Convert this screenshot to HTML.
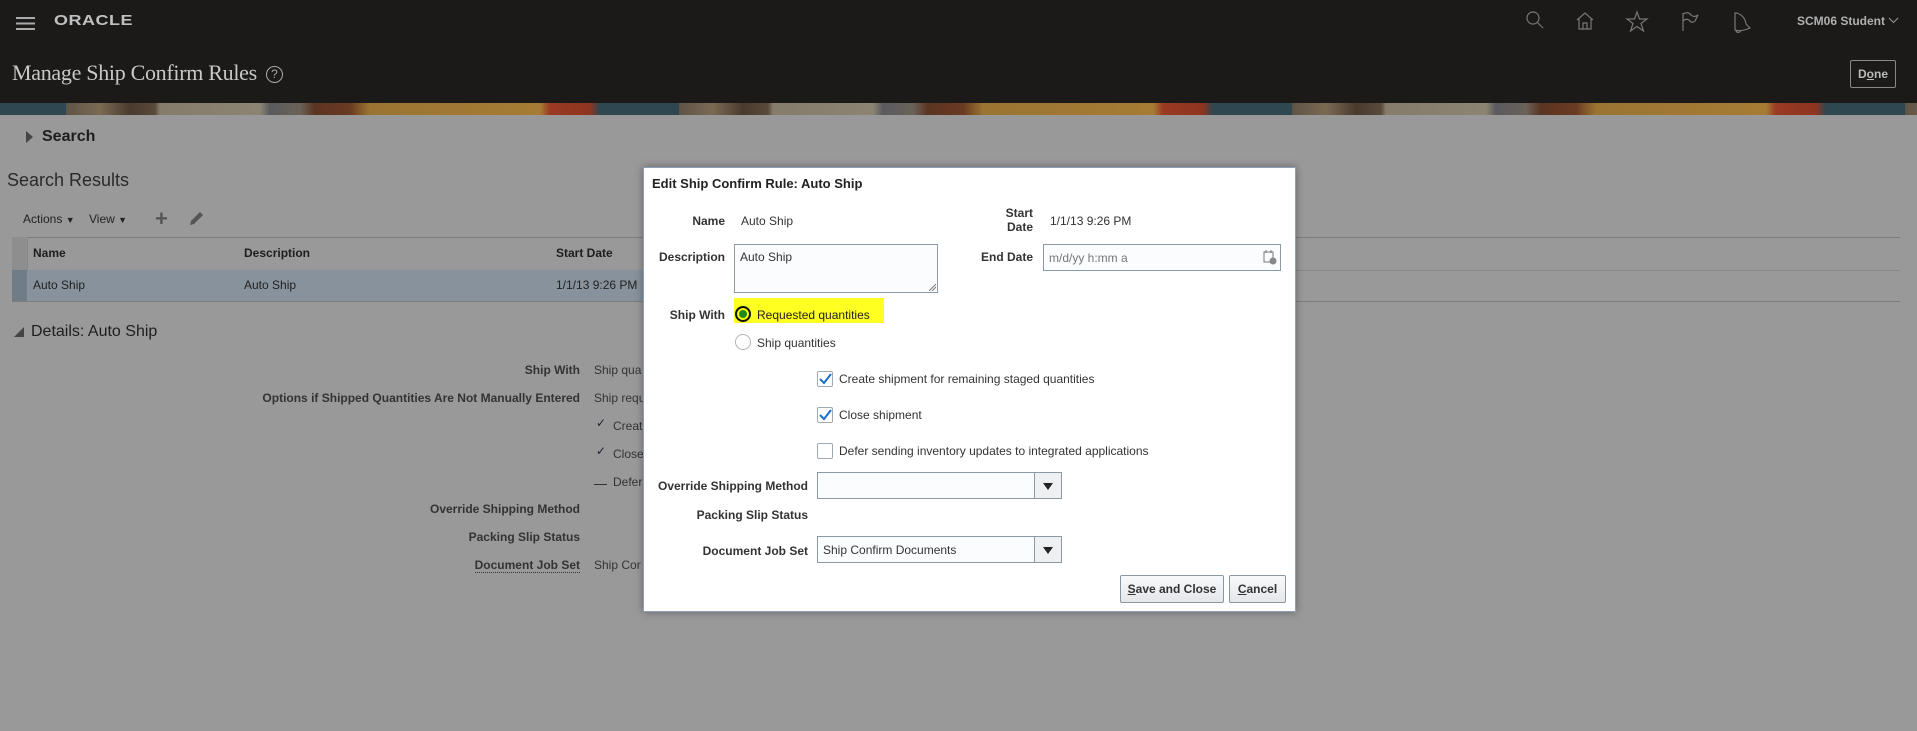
<!DOCTYPE html>
<html><head><meta charset="utf-8"><style>
*{margin:0;padding:0;box-sizing:border-box}
body{width:1917px;height:731px;overflow:hidden;background:#999;font-family:"Liberation Sans",Arial,sans-serif;position:relative;color:#222}
.a{position:absolute;white-space:nowrap}
#hdr{position:absolute;left:0;top:0;width:1917px;height:103px;background:#1b1a19}
#ban{position:absolute;left:0;top:103px;width:1917px;height:12px;background:repeating-linear-gradient(90deg,#2e4750 0,#2e4750 66px,#5e5446 66px,#7a6a52 100px,#4a3a2e 130px,#5a4a3c 155px,#857c6c 160px,#8c8472 260px,#5a5a5e 270px,#6a6258 300px,#5a3422 315px,#6a3a22 350px,#9a7432 370px,#a67c34 540px,#9a3a22 550px,#8e3420 590px,#2e4750 600px,#2e4750 613px)}
.lab{font-size:12px;font-weight:bold;color:#333;text-align:right}
.dl{font-size:12px;color:#333}
.dlg{position:absolute;left:643px;top:167px;width:653px;height:445px;background:#fff;box-shadow:0 0 8px rgba(0,0,0,.35);border:1px solid #8aa0b8}
.d{position:absolute;white-space:nowrap;font-size:12px;color:#333}
.b{font-weight:bold}
.inp{position:absolute;border:1px solid #8c9aa8;background:#fbfcfe}
.cb{position:absolute;width:16px;height:16px;border:1px solid #a0a8b0;background:#fff;border-radius:2px}
.btn{position:absolute;border:1px solid #8a96a2;border-radius:2px;background:linear-gradient(#f8f9fa,#e4e7ea);font-size:12px;font-weight:bold;color:#333;text-align:center;line-height:26px}
.dd{position:absolute;right:0;top:0;width:27px;height:100%;border-left:1px solid #8c9aa8;background:#eef0f2}
</style></head><body>
<div id="hdr"></div>
<div id="ban"></div>
<svg class="a" style="left:16px;top:17px" width="19" height="13"><g stroke="#aaa" stroke-width="2"><line x1="0" y1="1" x2="19" y2="1"/><line x1="0" y1="6.5" x2="19" y2="6.5"/><line x1="0" y1="12" x2="19" y2="12"/></g></svg>
<div class="a" style="left:54px;top:10px;font-size:18px;font-weight:bold;color:#c0c0c0;letter-spacing:0.5px;transform:scaleY(0.8)">ORACLE</div>
<div class="a" style="left:12px;top:60px;font-family:'Liberation Serif',serif;font-size:22px;color:#c8c8c8;letter-spacing:-0.3px">Manage Ship Confirm Rules</div>
<div class="a" style="left:266px;top:66px;width:17px;height:17px;border:1.5px solid #aaa;border-radius:50%;color:#aaa;font-size:12px;text-align:center;line-height:14px">?</div>
<svg class="a" style="left:1525px;top:10px" width="240" height="24" fill="none" stroke="#777" stroke-width="1.2">
<circle cx="8" cy="8" r="6"/><line x1="12.5" y1="12.5" x2="18" y2="18"/>
<path d="M52 10 L60 3 L68 10 M54 9 V19 H66 V9 M58 19 V13 H62 V19"/>
<path d="M112 2 L114.5 9 L122 9 L116 13.5 L118.5 21 L112 16.5 L105.5 21 L108 13.5 L102 9 L109.5 9 Z"/>
<path d="M158 3 V21 M158 4 Q163 1 166 5 Q169 8 173 5 L170 11 Q167 14 164 10 Q161 8 158 11"/>
<path d="M210 3 L212 3 Q220 6 221 14 L225 18 Q216 22 210 20 Z M211 21 Q213 24 216 21"/>
</svg>
<div class="a" style="left:1797px;top:14px;font-size:12px;font-weight:bold;color:#b0b0b0">SCM06 Student</div>
<svg class="a" style="left:1888px;top:17px" width="11" height="7"><path d="M1 1 L5.5 5.5 L10 1" stroke="#999" fill="none"/></svg>
<div class="a" style="left:1850px;top:60px;width:46px;height:28px;border:1px solid #888;border-radius:2px;color:#bbb;font-size:12px;font-weight:bold;text-align:center;line-height:26px">D<u>o</u>ne</div>
<div class="a" style="left:26px;top:131px;width:0;height:0;border-left:7px solid #444;border-top:6px solid transparent;border-bottom:6px solid transparent"></div>
<div class="a" style="left:42px;top:128px;font-size:16px;font-weight:bold;color:#1e1e1e">Search</div>
<div class="a" style="left:7px;top:170px;font-size:18px;color:#2a2a2a">Search Results</div>
<div class="a" style="left:23px;top:212px;font-size:12px;color:#222">Actions <span style="font-size:9px">▼</span></div>
<div class="a" style="left:89px;top:212px;font-size:12px;color:#222">View <span style="font-size:9px">▼</span></div>
<div class="a" style="left:155px;top:206px;font-size:22px;font-weight:bold;color:#555">+</div>
<svg class="a" style="left:188px;top:211px" width="16" height="16"><path d="M2 14 L3 10 L12 1 L15 4 L6 13 Z" fill="#555"/></svg>
<div class="a" style="left:12px;top:237px;width:1888px;height:1px;background:#7d7d7d"></div>
<div class="a" style="left:12px;top:237px;width:15px;height:64px;background:#8e8e8e"></div>
<div class="a" style="left:27px;top:237px;width:1px;height:33px;background:#888"></div>
<div class="a" style="left:33px;top:246px;font-size:12px;font-weight:bold;color:#1e1e1e">Name</div>
<div class="a" style="left:244px;top:246px;font-size:12px;font-weight:bold;color:#1e1e1e">Description</div>
<div class="a" style="left:556px;top:246px;font-size:12px;font-weight:bold;color:#1e1e1e">Start Date</div>
<div class="a" style="left:27px;top:270px;width:1873px;height:1px;background:#888"></div>
<div class="a" style="left:12px;top:270px;width:631px;height:31px;background:#88929c"></div>
<div class="a" style="left:12px;top:270px;width:15px;height:31px;background:#6f7d88"></div>
<div class="a" style="left:33px;top:278px;font-size:12px;color:#222">Auto Ship</div>
<div class="a" style="left:244px;top:278px;font-size:12px;color:#222">Auto Ship</div>
<div class="a" style="left:556px;top:278px;font-size:12px;color:#222">1/1/13 9:26 PM</div>
<div class="a" style="left:12px;top:301px;width:1888px;height:1px;background:#7d7d7d"></div>
<div class="a" style="left:14px;top:327px;width:0;height:0;border-right:10px solid #444;border-top:10px solid transparent"></div>
<div class="a" style="left:31px;top:323px;font-size:16px;color:#1e1e1e">Details: Auto Ship</div>
<div class="a lab" style="right:1337px;top:363px">Ship With</div>
<div class="a lab" style="right:1337px;top:391px">Options if Shipped Quantities Are Not Manually Entered</div>
<div class="a lab" style="right:1337px;top:502px">Override Shipping Method</div>
<div class="a lab" style="right:1337px;top:530px">Packing Slip Status</div>
<div class="a lab" style="right:1337px;top:558px;border-bottom:1px dotted #333">Document Job Set</div>
<div class="a dl" style="left:594px;top:363px">Ship qua</div>
<div class="a dl" style="left:594px;top:391px">Ship requ</div>
<div class="a dl" style="left:596px;top:416px;color:#223">✓</div><div class="a dl" style="left:613px;top:419px">Creat</div>
<div class="a dl" style="left:596px;top:444px;color:#223">✓</div><div class="a dl" style="left:613px;top:447px">Close</div>
<div class="a" style="left:594px;top:484px;width:13px;height:1px;background:#333"></div><div class="a dl" style="left:613px;top:475px">Defer</div>
<div class="a dl" style="left:594px;top:558px">Ship Cor</div>
<div class="dlg">
<div class="d b" style="left:8px;top:8px;font-size:13px;color:#222">Edit Ship Confirm Rule: Auto Ship</div>
<div class="d b" style="right:570px;top:46px">Name</div>
<div class="d" style="left:97px;top:46px">Auto Ship</div>
<div class="d b" style="right:262px;top:38px;text-align:right;line-height:14px">Start<br>Date</div>
<div class="d" style="left:406px;top:46px">1/1/13 9:26 PM</div>
<div class="d b" style="right:570px;top:82px">Description</div>
<div class="inp" style="left:90px;top:76px;width:204px;height:49px"><div class="d" style="left:5px;top:5px">Auto Ship</div>
<svg class="a" style="right:1px;bottom:1px" width="7" height="7"><path d="M0 7 L7 0 M3 7 L7 3" stroke="#777"/></svg></div>
<div class="d b" style="right:262px;top:82px">End Date</div>
<div class="inp" style="left:399px;top:76px;width:238px;height:27px"><div class="d" style="left:5px;top:6px;color:#777">m/d/yy h:mm a</div>
<svg class="a" style="left:219px;top:5px" width="14" height="15"><rect x="1" y="2" width="9" height="10" fill="none" stroke="#777"/><line x1="3" y1="0" x2="3" y2="3" stroke="#777"/><line x1="8" y1="0" x2="8" y2="3" stroke="#777"/><circle cx="10" cy="11" r="3.5" fill="#888"/></svg></div>
<div class="d b" style="right:570px;top:140px">Ship With</div>
<div class="a" style="left:90px;top:130px;width:150px;height:25px;background:#ffff22"></div>
<div class="a" style="left:91px;top:138px;width:16px;height:16px;border-radius:50%;border:2px solid #111;background:#1a8a1a;box-shadow:inset 0 0 0 2px #ff0"></div>
<div class="d" style="left:113px;top:140px;color:#222">Requested quantities</div>
<div class="a" style="left:91px;top:166px;width:16px;height:16px;border-radius:50%;border:1px solid #b0b4b8;background:#fff"></div>
<div class="d" style="left:113px;top:168px">Ship quantities</div>
<div class="cb" style="left:173px;top:203px"></div><svg class="a" style="left:175px;top:205px" width="13" height="12"><path d="M1 6 L5 10 L12 1" stroke="#1a6fc8" stroke-width="2" fill="none"/></svg>
<div class="d" style="left:195px;top:204px">Create shipment for remaining staged quantities</div>
<div class="cb" style="left:173px;top:239px"></div><svg class="a" style="left:175px;top:241px" width="13" height="12"><path d="M1 6 L5 10 L12 1" stroke="#1a6fc8" stroke-width="2" fill="none"/></svg>
<div class="d" style="left:195px;top:240px">Close shipment</div>
<div class="cb" style="left:173px;top:275px"></div>
<div class="d" style="left:195px;top:276px">Defer sending inventory updates to integrated applications</div>
<div class="d b" style="right:487px;top:311px">Override Shipping Method</div>
<div class="inp" style="left:173px;top:304px;width:245px;height:27px"><div class="dd"><div class="a" style="left:8px;top:10px;border-top:7px solid #222;border-left:5px solid transparent;border-right:5px solid transparent"></div></div></div>
<div class="d b" style="right:487px;top:340px">Packing Slip Status</div>
<div class="d b" style="right:487px;top:376px">Document Job Set</div>
<div class="inp" style="left:173px;top:368px;width:245px;height:27px"><div class="d" style="left:5px;top:6px">Ship Confirm Documents</div><div class="dd"><div class="a" style="left:8px;top:10px;border-top:7px solid #222;border-left:5px solid transparent;border-right:5px solid transparent"></div></div></div>
<div class="btn" style="left:476px;top:407px;width:104px;height:28px"><u>S</u>ave and Close</div>
<div class="btn" style="left:585px;top:407px;width:57px;height:28px"><u>C</u>ancel</div>
</div>
</body></html>
